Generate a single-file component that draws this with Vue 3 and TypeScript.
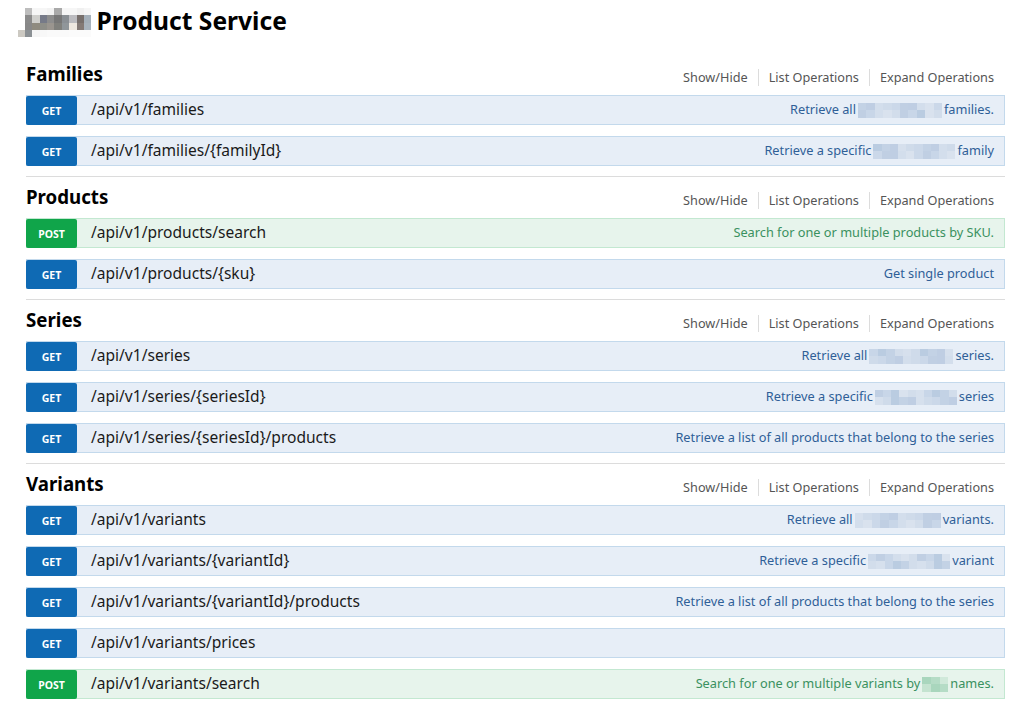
<script setup lang="ts">
interface Blur { w: number; cols: number; cells: string[]; }
interface Op { method: 'GET' | 'POST'; path: string; pre?: string; blur?: Blur; post?: string; }
interface Section { name: string; ops: Op[]; }

const blue = ['#cfdbea', '#c3d2e5', '#d6e0ed', '#bacce1', '#d2ddeb', '#c8d6e8', '#d9e2ee', '#c0cfe3', '#d3deec', '#cbd8e9', '#bfcee3'];
const green = ['#a9d6bd', '#c4e3d0', '#98cdb0', '#d0e9da', '#b5dcc6'];
const blur = (w: number, cols: number, set: string[], seed = 0): Blur => ({
  w,
  cols,
  cells: Array.from({ length: cols * 2 }, (_, i) => set[(i * 7 + seed + (i % 3) * 2) % set.length]),
});

const sections: Section[] = [
  { name: 'Families', ops: [
    { method: 'GET', path: '/api/v1/families', pre: 'Retrieve all', blur: blur(84, 10, blue, 1), post: 'families.' },
    { method: 'GET', path: '/api/v1/families/{familyId}', pre: 'Retrieve a specific', blur: blur(82, 10, blue, 3), post: 'family' },
  ] },
  { name: 'Products', ops: [
    { method: 'POST', path: '/api/v1/products/search', pre: 'Search for one or multiple products by SKU.' },
    { method: 'GET', path: '/api/v1/products/{sku}', pre: 'Get single product' },
  ] },
  { name: 'Series', ops: [
    { method: 'GET', path: '/api/v1/series', pre: 'Retrieve all', blur: blur(84, 10, blue, 5), post: 'series.' },
    { method: 'GET', path: '/api/v1/series/{seriesId}', pre: 'Retrieve a specific', blur: blur(82, 10, blue, 7), post: 'series' },
    { method: 'GET', path: '/api/v1/series/{seriesId}/products', pre: 'Retrieve a list of all products that belong to the series' },
  ] },
  { name: 'Variants', ops: [
    { method: 'GET', path: '/api/v1/variants', pre: 'Retrieve all', blur: blur(86, 10, blue, 2), post: 'variants.' },
    { method: 'GET', path: '/api/v1/variants/{variantId}', pre: 'Retrieve a specific', blur: blur(82, 10, blue, 9), post: 'variant' },
    { method: 'GET', path: '/api/v1/variants/{variantId}/products', pre: 'Retrieve a list of all products that belong to the series' },
    { method: 'GET', path: '/api/v1/variants/prices' },
    { method: 'POST', path: '/api/v1/variants/search', pre: 'Search for one or multiple variants by', blur: blur(26, 3, green, 0), post: 'names.' },
  ] },
];

const w = '#f6f6f6';
const logo = [
  'transparent', '#bdbdbd', w, w, '#f2f2f2', '#a9a9a9', w, w, '#f0f0f0', '#f6f6f6',
  'transparent', '#8a8a8a', '#cfcfcc', '#767a88', '#8d8d8d', '#777777', '#8a8f94', '#bcbcc0', '#776f6c', '#a5b0ba',
  'transparent', '#888888', '#8f8b80', '#8e8e88', '#9a958f', '#80807c', '#90969a', '#eee8e0', '#847a76', '#a9b4be',
  '#ccc9c2', '#8b9094', '#f5f5f5', '#f8f8f8', '#fafafa', '#fafafa', '#fafafa', '#fbfbfb', '#fbfbfb', '#fbfbfb',
];
</script>

<template>
  <div class="page">
    <h1 class="title">
      <span class="logo"><i v-for="(c, i) in logo" :key="i" :style="{ background: c }"></i></span>
      <span>Product Service</span>
    </h1>
    <section v-for="s in sections" :key="s.name" class="section">
      <header class="head">
        <h2>{{ s.name }}</h2>
        <nav>
          <a>Show/Hide</a>
          <a>List Operations</a>
          <a>Expand Operations</a>
        </nav>
      </header>
      <div v-for="op in s.ops" :key="op.path" class="row" :class="op.method.toLowerCase()">
        <span class="badge">{{ op.method }}</span>
        <span class="path">{{ op.path }}</span>
        <span class="desc">
          <template v-if="op.pre">{{ op.pre }}</template>
          <span
            v-if="op.blur"
            class="blur"
            :style="{ width: op.blur.w + 'px', gridTemplateColumns: `repeat(${op.blur.cols}, 1fr)` }"
          >
            <i v-for="(c, i) in op.blur.cells" :key="i" :style="{ background: c }"></i>
          </span>
          <template v-if="op.post">{{ op.post }}</template>
        </span>
      </div>
    </section>
  </div>
</template>

<style>
body { background: #fff; }
</style>

<style scoped>
.page {
  width: 1024px;
  height: 717px;
  overflow: hidden;
  box-sizing: border-box;
  padding: 0 19px 0 26px;
  font-family: "Noto Sans", "Open Sans", sans-serif;
  color: #000;
}
.title {
  display: flex;
  align-items: center;
  height: 42px;
  margin: 0 0 12px;
  font-size: 24.6px;
  font-weight: 700;
  line-height: 40px;
  gap: 5px;
}
.logo {
  display: grid;
  grid-template-columns: repeat(10, 7.4px);
  grid-template-rows: repeat(4, 7.3px);
  flex: none;
  margin-left: -8.5px;
  margin-top: 3px;
}
.section {
  border-bottom: 1px solid #dcdcdc;
  padding-bottom: 10px;
}
.section:last-child { border-bottom: 0; }
.head {
  display: flex;
  justify-content: space-between;
  align-items: center;
  height: 41px;
}
.head h2 {
  margin: 0 0 2px;
  font-size: 18.7px;
  font-weight: 700;
  line-height: 39px;
}
.head nav {
  display: flex;
  align-items: center;
  padding-right: 11px;
  margin-top: 6px;
}
.head a {
  font-size: 12.7px;
  color: #555;
  line-height: 17px;
  padding: 0 10px;
  border-right: 1px solid #dcdcdc;
}
.head a:last-child { border-right: 0; padding-right: 0; }
.row {
  display: flex;
  align-items: center;
  height: 30px;
  box-sizing: border-box;
  margin-bottom: 11px;
  border: 1px solid;
}
.row:last-child { margin-bottom: 0; }
.row.get { background: #e7eef7; border-color: #c3d9ec; }
.row.post { background: #e7f4ec; border-color: #c3e8d1; }
.badge {
  width: 51px;
  height: 29px;
  flex: none;
  box-sizing: border-box;
  margin: -1px 0 -1px -1px;
  border-radius: 2px;
  color: #fff;
  font-size: 10.5px;
  font-weight: 700;
  line-height: 31px;
  text-align: center;
}
.get .badge { background: #0f6ab4; }
.post .badge { background: #10a54a; }
.path {
  margin-left: 14px;
  padding-bottom: 2px;
  font-size: 15.55px;
  color: #1a1a1a;
}
.desc {
  margin-left: auto;
  padding: 0 10px 2px 0;
  display: flex;
  align-items: center;
  font-size: 12.75px;
}
.get .desc { color: #2f5f97; }
.post .desc { color: #3a9160; }
.blur {
  display: inline-grid;
  grid-template-rows: repeat(2, 7.5px);
  margin: 2px 2px 0;
}
</style>
